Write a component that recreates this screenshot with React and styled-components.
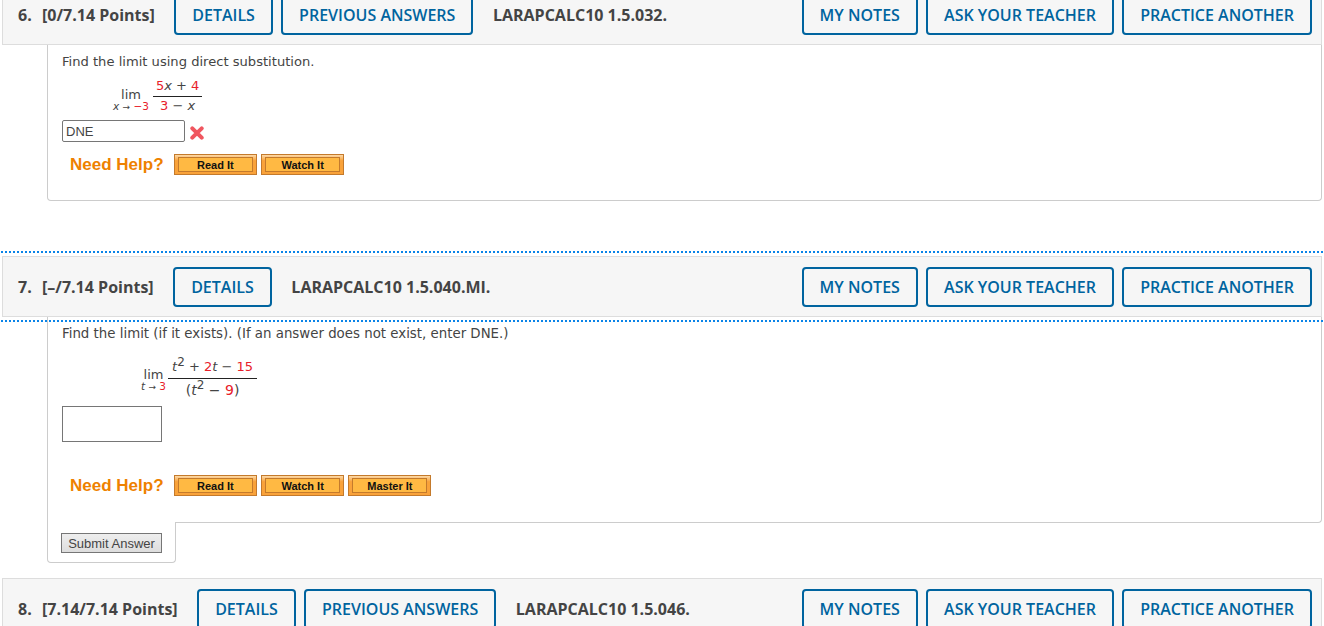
import React from 'react';
import styled, { createGlobalStyle } from 'styled-components';

const GlobalStyle = createGlobalStyle`
    html, body {
        margin: 0;
        padding: 0;
        height: 626px;
        overflow: hidden;
        background: #fff;
    }
`;

const Question = ({ num, points, prev, code }) => (
    <Header>
        <Num>{num}.</Num>
        <Points>[{points} Points]</Points>
        <HeadButton>DETAILS</HeadButton>
        {prev && <HeadButton>PREVIOUS ANSWERS</HeadButton>}
        <Code>{code}</Code>
        <Actions>
            <HeadButton>MY NOTES</HeadButton>
            <HeadButton>ASK YOUR TEACHER</HeadButton>
            <HeadButton>PRACTICE ANOTHER</HeadButton>
        </Actions>
    </Header>
);

const Help = ({ items }) => (
    <HelpRow>
        <NeedHelp>Need Help?</NeedHelp>
        {items.map((item) => (
            <HelpButton key={item}><span>{item}</span></HelpButton>
        ))}
    </HelpRow>
);

const Cross = () => (
    <CrossIcon width="14" height="14" viewBox="0 0 14 14">
        <path d="M2.3 2.3 L11.7 11.7 M11.7 2.3 L2.3 11.7" stroke="#f0565f" strokeWidth="4" strokeLinecap="round" />
    </CrossIcon>
);

export default () => (
    <Page>
        <GlobalStyle />
        <Question num="6" points="0/7.14" prev code="LARAPCALC10 1.5.032." />
        <Panel $height={156}>
            <Prompt $top={9} $size={13.1}>Find the limit using direct substitution.</Prompt>
            <MathRow $left={51} $top={8}>
                <Lim $drop={8}>
                    <LimWord>lim</LimWord>
                    <LimSub><i>x</i> <Arrow>→</Arrow> <Red>−3</Red></LimSub>
                </Lim>
                <Fraction $line={16} $gap={4}>
                    <Top $rule={2} $pad={3}><Red>5</Red><i>x</i> + <Red>4</Red></Top>
                    <Bottom $size={13}><Red>3</Red> − <i>x</i></Bottom>
                </Fraction>
            </MathRow>
            <AnswerRow>
                <AnswerInput readOnly value="DNE" />
                <Cross />
            </AnswerRow>
            <Help items={['Read It', 'Watch It']} />
        </Panel>

        <Focused>
            <Question num="7" points="–/7.14" code="LARAPCALC10 1.5.040.MI." />
        </Focused>
        <Panel $height={207} $open>
            <Prompt $top={10} $size={13.35}>Find the limit (if it exists). (If an answer does not exist, enter DNE.)</Prompt>
            <MathRow $left={79} $top={15}>
                <Lim $drop={3}>
                    <LimWord>lim</LimWord>
                    <LimSub><i>t</i> <Arrow>→</Arrow> <Red>3</Red></LimSub>
                </Lim>
                <Fraction $line={20} $gap={2}>
                    <Top $rule={1} $pad={4}><i>t</i><sup>2</sup> + <Red>2</Red><i>t</i> − <Red>15</Red></Top>
                    <Bottom $size={14}>(<i>t</i><sup>2</sup> − <Red>9</Red>)</Bottom>
                </Fraction>
            </MathRow>
            <BlankInput />
            <HelpSpacer />
            <Help items={['Read It', 'Watch It', 'Master It']} />
        </Panel>
        <SubmitTab>
            <SubmitButton>Submit Answer</SubmitButton>
        </SubmitTab>

        <Question num="8" points="7.14/7.14" prev code="LARAPCALC10 1.5.046." />
    </Page>
);

const Page = styled.div`
    margin-top: -16px;
    display: flex;
    flex-direction: column;
    font-family: "DejaVu Sans", sans-serif;
    color: #444;
`;

const Header = styled.div`
    box-sizing: border-box;
    height: 61px;
    margin: 0 2px;
    padding: 0 9px 0 15px;
    display: flex;
    align-items: center;
    flex-shrink: 0;
    background: #f6f6f6;
    border: 1px solid #ddd;
    font-family: "Open Sans", sans-serif;
    font-size: 16px;
    font-weight: 700;
    color: #444;
`;

const Num = styled.span`
    width: 24px;
`;

const Points = styled.span`
    margin-right: 19.5px;
`;

const HeadButton = styled.div`
    box-sizing: border-box;
    height: 40px;
    padding: 0 16px;
    margin-right: 8.2px;
    display: flex;
    align-items: center;
    border: 2px solid #00649f;
    border-radius: 4px;
    color: #00649f;
    font-weight: 600;
    white-space: nowrap;

    &:last-child {
        margin-right: 0;
    }
`;

const Code = styled.span`
    margin-left: 11.4px;
`;

const Actions = styled.div`
    margin-left: auto;
    display: flex;
`;

const Panel = styled.div`
    box-sizing: border-box;
    height: ${(p) => p.$height}px;
    margin: ${(p) => (p.$open ? '-4px' : '0')} 2px 0 47px;
    padding-left: 14px;
    flex-shrink: 0;
    background: #fff;
    border: 1px solid #ccc;
    border-top: 0;
    border-radius: ${(p) => (p.$open ? '0 0 4px 0' : '0 0 4px 4px')};
`;

const Prompt = styled.div`
    padding-top: ${(p) => p.$top}px;
    font-size: ${(p) => p.$size}px;
    line-height: 16px;
    white-space: nowrap;
    color: #444;
`;

const MathRow = styled.div`
    display: flex;
    align-items: center;
    margin: ${(p) => p.$top}px 0 0 ${(p) => p.$left}px;
    font-family: "DejaVu Sans", sans-serif;
    color: #444;
`;

const Red = styled.span`
    color: #e8202a;
`;

const Arrow = styled.span`
    font-size: 9px;
`;

const Lim = styled.div`
    display: flex;
    flex-direction: column;
    align-items: center;
    margin-top: ${(p) => p.$drop}px;
`;

const LimWord = styled.span`
    font-size: 13px;
    line-height: 13px;
`;

const LimSub = styled.span`
    font-size: 10.5px;
    line-height: 11px;
    white-space: nowrap;
`;

const Fraction = styled.div`
    display: flex;
    flex-direction: column;
    align-items: center;
    margin-left: ${(p) => p.$gap}px;
    font-size: 13px;
    line-height: ${(p) => p.$line}px;
    white-space: nowrap;

    sup {
        font-size: 12px;
        line-height: 0;
    }
`;

const Top = styled.div`
    padding: 0 ${(p) => p.$pad}px ${(p) => p.$rule}px;
    border-bottom: 1px solid #222;
    align-self: stretch;
    text-align: center;
`;

const Bottom = styled.div`
    padding-top: 1px;
    font-size: ${(p) => p.$size}px;
`;

const AnswerRow = styled.div`
    display: flex;
    align-items: center;
    gap: 5px;
    margin-top: 6px;
`;

const CrossIcon = styled.svg`
    margin-top: 3px;
`;

const AnswerInput = styled.input`
    box-sizing: border-box;
    width: 123px;
    height: 22px;
    padding: 0 3px;
    border: 1px solid #767676;
    border-radius: 2px;
    font-family: "Liberation Sans", sans-serif;
    font-size: 13px;
    color: #444;
    outline: none;
`;

const BlankInput = styled.div`
    box-sizing: border-box;
    width: 100px;
    height: 36px;
    margin-top: 6px;
    border: 1px solid #767676;
`;

const HelpSpacer = styled.div`
    height: 21px;
`;

const HelpRow = styled.div`
    display: flex;
    align-items: center;
    gap: 4.3px;
    margin: 12px 0 0 8px;
`;

const NeedHelp = styled.span`
    margin-right: 6px;
    font-family: "Liberation Sans", sans-serif;
    font-size: 17px;
    font-weight: 700;
    color: #ee8100;
`;

const HelpButton = styled.div`
    box-sizing: border-box;
    width: 83px;
    height: 21px;
    padding: 2px 3px;
    background: linear-gradient(#fcd9a8, #f9a23a 30%);
    border: 1px solid #c47a2c;

    span {
        box-sizing: border-box;
        display: block;
        height: 15px;
        border: 1px solid #c47a2c;
        background: #ffb943;
        font-family: "Liberation Sans", sans-serif;
        font-size: 11px;
        font-weight: 700;
        line-height: 14px;
        text-align: center;
        color: #111;
    }
`;

const SubmitTab = styled.div`
    box-sizing: border-box;
    width: 129px;
    height: 41px;
    margin: -1px 0 15px 47px;
    padding: 11px 0 0 13px;
    flex-shrink: 0;
    position: relative;
    background: #fff;
    border: 1px solid #ccc;
    border-top: 0;
    border-radius: 0 0 4px 4px;
`;

const SubmitButton = styled.div`
    box-sizing: border-box;
    width: 101px;
    height: 20px;
    display: flex;
    align-items: center;
    justify-content: center;
    background: linear-gradient(#eee, #ddd);
    border: 1px solid #767676;
    font-family: "Liberation Sans", sans-serif;
    font-size: 13px;
    color: #444;
`;

const Focused = styled.div`
    margin: 52px 0 0;
    padding: 3px 0;
    flex-shrink: 0;
    outline: 2px dotted #0a84e8;
    position: relative;
    z-index: 1;
`;
